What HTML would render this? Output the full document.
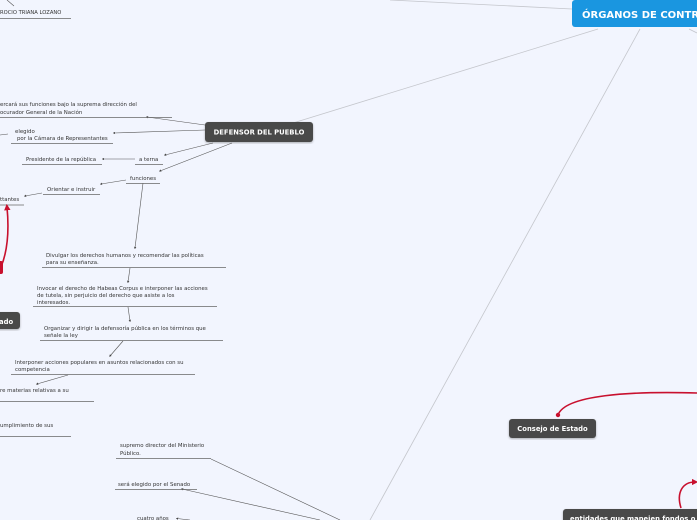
<!DOCTYPE html>
<html><head><meta charset="utf-8"><style>
html,body{margin:0;padding:0;width:697px;height:520px;overflow:hidden;background:#f2f5fe;}
svg{display:block;font-family:"DejaVu Sans","Liberation Sans",sans-serif;}
.t{font-size:5.4px;fill:#333;}
.u{stroke:#666;stroke-width:0.8;}
.l{stroke:#555;stroke-width:0.6;fill:none;}
.g{stroke:#c4c6cc;stroke-width:0.8;fill:none;}
.r{stroke:#c8102e;stroke-width:1.6;fill:none;}
.b{fill:#fff;font-weight:bold;font-size:6.8px;}
</style></head><body>
<svg width="697" height="520" viewBox="0 0 697 520">
<defs>
<marker id="a" markerWidth="4" markerHeight="4" refX="2" refY="2" orient="auto"><path d="M0,0 L4,2 L0,4z" fill="#444"/></marker>
<marker id="ra" markerWidth="4" markerHeight="4" refX="2" refY="2" orient="auto"><path d="M0,0 L4,2 L0,4z" fill="#c8102e"/></marker>
<filter id="sh"><feDropShadow dx="0" dy="1" stdDeviation="1" flood-opacity="0.3"/></filter>
</defs>
<path class="g" d="M572,9 L390,0"/>
<path class="g" d="M598,29 L293,123"/>
<path class="g" d="M640,29 L370,520"/>
<path class="g" d="M689,29 L697,33"/>
<path class="l" d="M7,0 L14,6"/>
<text class="t" x="0" y="14" style="font-size:5.2px">ROCIO TRIANA LOZANO</text>
<line class="u" x1="0" y1="18.5" x2="71" y2="18.5"/>
<rect x="572" y="0" width="130" height="27" rx="3" fill="#1a96e0"/>
<text x="582" y="18" fill="#fff" font-weight="bold" font-size="10">ÓRGANOS DE CONTROL</text>
<path class="l" d="M205,125 L147,117" marker-end="url(#a)"/>
<path class="l" d="M205,130 L114,133" marker-end="url(#a)"/>
<path class="l" d="M213,143 L165,155" marker-end="url(#a)"/>
<path class="l" d="M232,143 L160,171" marker-end="url(#a)"/>
<path class="l" d="M0,135 L8,134"/>
<path class="l" d="M135,159 L103,159" marker-end="url(#a)"/>
<path class="l" d="M126,180 L101,184" marker-end="url(#a)"/>
<path class="l" d="M42,193 L25,196" marker-end="url(#a)"/>
<path class="l" d="M143,183 L135,248" marker-end="url(#a)"/>
<path class="l" d="M130,268 L128,282" marker-end="url(#a)"/>
<path class="l" d="M128,307 L130,321" marker-end="url(#a)"/>
<path class="l" d="M123,341 L110,356" marker-end="url(#a)"/>
<path class="l" d="M68,375 L37,384" marker-end="url(#a)"/>
<path class="l" d="M211,459 L340,520"/>
<path class="l" d="M320,520 L182,489" marker-end="url(#a)"/>
<path class="l" d="M190,520 L177,518.5" marker-end="url(#a)"/>
<rect x="205" y="122" width="108" height="20" rx="3" fill="#4a4a48" filter="url(#sh)"/>
<text class="b" x="259" y="134.5" text-anchor="middle">DEFENSOR DEL PUEBLO</text>
<text class="t" x="0" y="106">ercará sus funciones bajo la suprema dirección del</text>
<text class="t" x="0" y="114">ocurador General de la Nación</text>
<line class="u" x1="0" y1="117.5" x2="172" y2="117.5"/>
<text class="t" x="15" y="133">elegido</text>
<text class="t" x="17" y="140">por la Cámara de Representantes</text>
<line class="u" x1="11" y1="143.5" x2="113" y2="143.5"/>
<text class="t" x="26" y="161">Presidente de la república</text>
<line class="u" x1="22" y1="164.5" x2="102" y2="164.5"/>
<text class="t" x="139" y="161">a terna</text>
<line class="u" x1="135" y1="164.5" x2="163" y2="164.5"/>
<text class="t" x="130" y="180">funciones</text>
<line class="u" x1="126" y1="183.5" x2="160" y2="183.5"/>
<text class="t" x="47" y="191">Orientar e instruir</text>
<line class="u" x1="43" y1="194.5" x2="100" y2="194.5"/>
<text class="t" x="0" y="201">ttantes</text>
<line class="u" x1="0" y1="205" x2="24" y2="205"/>
<text class="t" x="46" y="257">Divulgar los derechos humanos y recomendar las políticas</text>
<text class="t" x="46" y="264">para su enseñanza.</text>
<line class="u" x1="42" y1="267.5" x2="226" y2="267.5"/>
<text class="t" x="37" y="290">Invocar el derecho de Habeas Corpus e interponer las acciones</text>
<text class="t" x="37" y="297">de tutela, sin perjuicio del derecho que asiste a los</text>
<text class="t" x="37" y="304">interesados.</text>
<line class="u" x1="33" y1="306.5" x2="217" y2="306.5"/>
<text class="t" x="44" y="330">Organizar y dirigir la defensoría pública en los términos que</text>
<text class="t" x="44" y="337">señale la ley</text>
<line class="u" x1="40" y1="340.5" x2="223" y2="340.5"/>
<text class="t" x="15" y="364">Interponer acciones populares en asuntos relacionados con su</text>
<text class="t" x="15" y="371">competencia</text>
<line class="u" x1="11" y1="374.5" x2="195" y2="374.5"/>
<text class="t" x="0" y="392">re materias relativas a su</text>
<line class="u" x1="0" y1="401.5" x2="94" y2="401.5"/>
<text class="t" x="0" y="427">umplimiento de sus</text>
<line class="u" x1="0" y1="436.5" x2="71" y2="436.5"/>
<text class="t" x="120" y="447">supremo director del Ministerio</text>
<text class="t" x="120" y="455">Público.</text>
<line class="u" x1="116" y1="458.5" x2="211" y2="458.5"/>
<text class="t" x="118" y="486">será elegido por el Senado</text>
<line class="u" x1="115" y1="489.5" x2="197" y2="489.5"/>
<text class="t" x="137" y="520">cuatro años</text>
<path class="r" d="M1,267 C8,250 9,228 7,207" marker-end="url(#ra)"/>
<rect x="-4" y="261" width="7" height="13" rx="2" fill="#c8102e"/>
<rect x="-6" y="312" width="26" height="17" rx="3" fill="#4a4a48" filter="url(#sh)"/>
<text class="b" x="-1" y="324">ado</text>
<path class="r" d="M558,415 C565,395 630,391 697,393"/>
<circle cx="558" cy="415" r="2.2" fill="#c8102e"/>
<rect x="509" y="419" width="87" height="19" rx="3" fill="#4a4a48" filter="url(#sh)"/>
<text class="b" x="552.5" y="431" text-anchor="middle">Consejo de Estado</text>
<path class="r" d="M681,508 C676,492 683,482 695,482" marker-end="url(#ra)"/>
<rect x="563" y="509" width="140" height="20" rx="3" fill="#4a4a48" filter="url(#sh)"/>
<text class="b" x="570" y="521">entidades que manejen fondos o</text>
</svg>
</body></html>
